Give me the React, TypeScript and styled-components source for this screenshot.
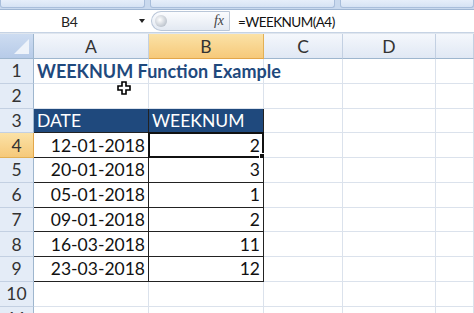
import React from "react";
import styled, { createGlobalStyle } from "styled-components";

const Global = createGlobalStyle`
  html, body { margin: 0; padding: 0; background: #fff; overflow: hidden; }
  body { font-family: Lato, "Liberation Sans", sans-serif; }
`;

const Page = styled.div`
  width: 474px;
  height: 313px;
  display: flex;
  flex-direction: column;
  background: #fff;
  overflow: hidden;
`;

const Ribbon = styled.div`
  height: 10px;
  flex: none;
  display: flex;
  gap: 5px;
  background: #c9d9ee;
  border-bottom: 1px solid #9fb6d3;
  box-sizing: border-box;
`;

const RibbonTab = styled.div<{ $w: number }>`
  width: ${(p) => p.$w}px;
  flex: ${(p) => (p.$w === 0 ? 1 : "none")};
  height: 8px;
  background: linear-gradient(#e6eefa, #d6e3f4);
  border: 1px solid #a9bedb;
  border-top: none;
  border-radius: 0 0 3px 3px;
  box-sizing: border-box;
`;

const FormulaBar = styled.div`
  height: 22px;
  flex: none;
  display: flex;
  align-items: center;
  background: #fff;
  border-bottom: 1px solid #c6d3e4;
`;

const NameBox = styled.div`
  width: 150px;
  height: 100%;
  position: relative;
  font-size: 14px;
  letter-spacing: -0.3px;
  color: #222;
`;

const NameText = styled.span`
  position: absolute;
  left: 61px;
  top: 3px;
`;

const Arrow = styled.span`
  position: absolute;
  left: 139px;
  top: 9px;
  width: 0;
  height: 0;
  border-left: 3px solid transparent;
  border-right: 3px solid transparent;
  border-top: 4px solid #222;
`;

const Pill = styled.div`
  width: 79px;
  height: 20px;
  margin-left: 1px;
  border-radius: 10px 0 0 10px;
  background: linear-gradient(#fbfcfe, #e3e9f2);
  border: 1px solid #b9c6d8;
  border-right: 1px solid #c0c9d6;
  box-sizing: border-box;
  display: flex;
  align-items: center;
  justify-content: space-between;
  padding: 0 5px 0 3px;
  flex: none;
`;

const Knob = styled.span`
  width: 12px;
  height: 12px;
  border-radius: 50%;
  background: radial-gradient(circle at 40% 40%, #fff, #bfc6cf 70%, #9aa3ae);
`;

const Fx = styled.span`
  font-family: "Liberation Serif", serif;
  font-style: italic;
  font-size: 14px;
  color: #444;
`;

const FormulaText = styled.div`
  padding-left: 8px;
  font-size: 13.5px;
  letter-spacing: -0.55px;
  color: #111;
  padding-top: 1px;
`;

const Gap = styled.div`
  height: 1px;
  flex: none;
  background: #dfe6ef;
`;

const Grid = styled.div`
  display: grid;
  grid-template-columns: 34px 115px 115px 79px 93px 1fr;
  grid-template-rows: 25px repeat(11, 24.75px);
  flex: none;
`;

const Corner = styled.div`
  background: linear-gradient(#cddcf1, #b7cbe8);
  border-right: 1px solid #9eb6ce;
  border-bottom: 1px solid #9eb6ce;
  position: relative;
  box-sizing: border-box;
  &::after {
    content: "";
    position: absolute;
    right: 4px;
    bottom: 4px;
    width: 0;
    height: 0;
    border-left: 15px solid transparent;
    border-bottom: 15px solid #eef3fa;
  }
`;

const ColHead = styled.div<{ $sel?: boolean }>`
  background: ${(p) =>
    p.$sel
      ? "linear-gradient(#fbe2a7, #f6c97a)"
      : "linear-gradient(#f4f7fc, #e0e8f4)"};
  border-right: 1px solid ${(p) => (p.$sel ? "#e2b055" : "#c3d0e2")};
  border-bottom: 1px solid ${(p) => (p.$sel ? "#e2a64a" : "#9eb6ce")};
  box-sizing: border-box;
  display: flex;
  align-items: center;
  justify-content: center;
  font-size: 17.5px;
  color: #333;
`;

const RowHead = styled.div<{ $sel?: boolean }>`
  background: ${(p) =>
    p.$sel ? "linear-gradient(#fbe2a7, #f6c97a)" : "#e4ecf7"};
  border-right: 1px solid ${(p) => (p.$sel ? "#e2a64a" : "#9eb6ce")};
  border-bottom: 1px solid ${(p) => (p.$sel ? "#e2b055" : "#c3d0e2")};
  box-sizing: border-box;
  display: flex;
  align-items: center;
  justify-content: center;
  font-size: 17.5px;
  color: #333;
`;

const Cell = styled.div<{
  $kind?: "plain" | "head" | "data";
  $right?: boolean;
}>`
  box-sizing: border-box;
  display: flex;
  align-items: center;
  justify-content: ${(p) => (p.$right ? "flex-end" : "flex-start")};
  padding: 0 3px 0 3px;
  font-size: 17.5px;
  white-space: nowrap;
  position: relative;
  background: ${(p) => (p.$kind === "head" ? "#1f497d" : "#fff")};
  color: ${(p) => (p.$kind === "head" ? "#fff" : "#111")};
  border-right: 1px solid
    ${(p) => (p.$kind === "data" || p.$kind === "head" ? "#222" : "#dbe2ec")};
  border-bottom: 1px solid
    ${(p) => (p.$kind === "data" || p.$kind === "head" ? "#222" : "#dbe2ec")};
`;

const Title = styled.span`
  font-weight: bold;
  font-size: 18px;
  color: #1f497d;
  position: relative;
  z-index: 1;
`;

const Selected = styled.div`
  position: absolute;
  inset: -1px -1px -1px -1px;
  border: 2px solid #111;
  pointer-events: none;
  &::after {
    content: "";
    position: absolute;
    right: -4px;
    bottom: -4px;
    width: 5px;
    height: 5px;
    background: #111;
    border: 1px solid #fff;
  }
`;

const CursorIcon = styled.svg`
  position: absolute;
  left: 83px;
  top: -3px;
  z-index: 2;
`;

const cols = ["A", "B", "C", "D", ""];

const data: [string, number][] = [
  ["12-01-2018", 2],
  ["20-01-2018", 3],
  ["05-01-2018", 1],
  ["09-01-2018", 2],
  ["16-03-2018", 11],
  ["23-03-2018", 12],
];

export default function App() {
  const rows: React.ReactNode[] = [];
  for (let r = 1; r <= 11; r++) {
    rows.push(
      <RowHead key={`h${r}`} $sel={r === 4}>
        {r}
      </RowHead>
    );
    if (r === 1) {
      rows.push(
        <Cell key="a1">
          <Title>WEEKNUM Function Example</Title>
        </Cell>
      );
      for (let c = 1; c < 5; c++) rows.push(<Cell key={`1-${c}`} />);
    } else if (r === 2) {
      rows.push(
        <Cell key="a2">
          <CursorIcon width="14" height="14" viewBox="0 0 14 14">
            <path
              d="M5 1h4v4h4v4H9v4H5V9H1V5h4z"
              fill="#fff"
              stroke="#000"
              strokeWidth="1.6"
            />
          </CursorIcon>
        </Cell>
      );
      for (let c = 1; c < 5; c++) rows.push(<Cell key={`2-${c}`} />);
    } else if (r === 3) {
      rows.push(
        <Cell key="a3" $kind="head">
          DATE
        </Cell>
      );
      rows.push(
        <Cell key="b3" $kind="head">
          WEEKNUM
        </Cell>
      );
      for (let c = 2; c < 5; c++) rows.push(<Cell key={`3-${c}`} />);
    } else if (r <= 9) {
      const [d, w] = data[r - 4];
      rows.push(
        <Cell key={`a${r}`} $kind="data" $right>
          {d}
        </Cell>
      );
      rows.push(
        <Cell key={`b${r}`} $kind="data" $right>
          {w}
          {r === 4 && <Selected />}
        </Cell>
      );
      for (let c = 2; c < 5; c++) rows.push(<Cell key={`${r}-${c}`} />);
    } else {
      for (let c = 0; c < 5; c++) rows.push(<Cell key={`${r}-${c}`} />);
    }
  }

  return (
    <Page>
      <Global />
      <Ribbon>
        <RibbonTab $w={145} />
        <RibbonTab $w={185} />
        <RibbonTab $w={0} />
      </Ribbon>
      <FormulaBar>
        <NameBox>
          <NameText>B4</NameText>
          <Arrow />
        </NameBox>
        <Pill>
          <Knob />
          <Fx>fx</Fx>
        </Pill>
        <FormulaText>=WEEKNUM(A4)</FormulaText>
      </FormulaBar>
      <Gap />
      <Grid>
        <Corner />
        {cols.map((c, i) => (
          <ColHead key={i} $sel={c === "B"}>
            {c}
          </ColHead>
        ))}
        {rows}
      </Grid>
    </Page>
  );
}
